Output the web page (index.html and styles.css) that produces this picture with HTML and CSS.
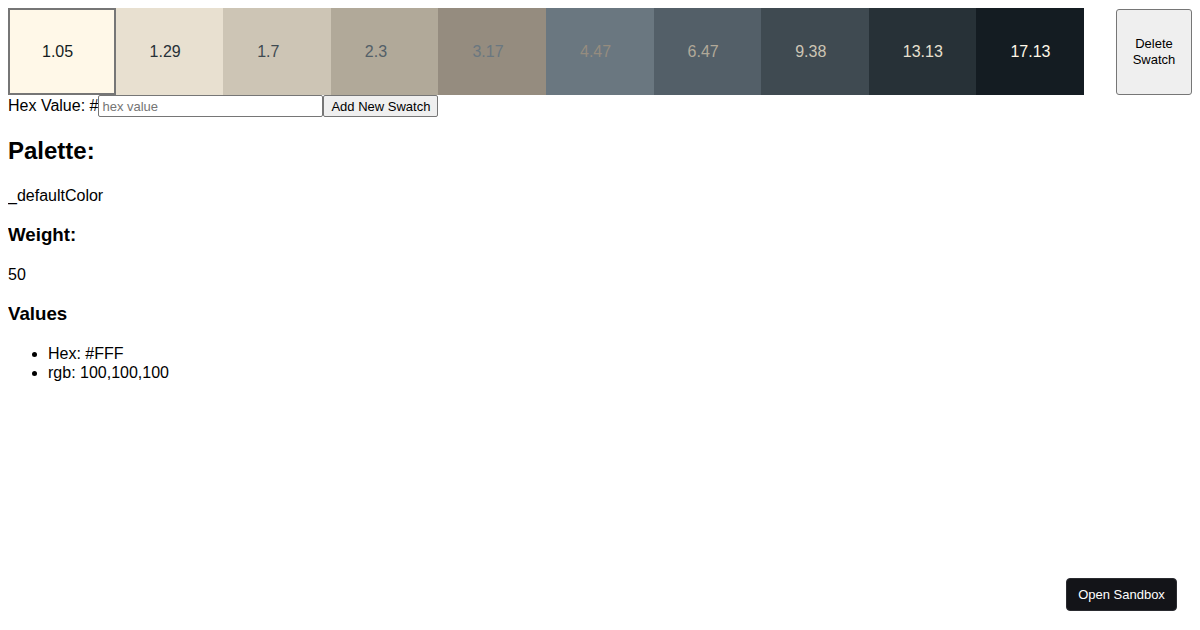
FILE: index.html
```html
<!DOCTYPE html>
<html lang="en">
<head>
  <meta charset="UTF-8">
  <title>Palette</title>
  <link rel="stylesheet" href="styles.css">
</head>
<body>

<div class="top">
  <div class="swatches">
    <div class="swatch s1 selected">1.05</div>
    <div class="swatch s2">1.29</div>
    <div class="swatch s3">1.7</div>
    <div class="swatch s4">2.3</div>
    <div class="swatch s5">3.17</div>
    <div class="swatch s6">4.47</div>
    <div class="swatch s7">6.47</div>
    <div class="swatch s8">9.38</div>
    <div class="swatch s9">13.13</div>
    <div class="swatch s10">17.13</div>
  </div>
  <button class="delete">Delete<br>Swatch</button>
</div>

<div class="add">
  <label for="hex">Hex Value: #</label><input id="hex" type="text" placeholder="hex value"><button>Add New Swatch</button>
</div>

<h2>Palette:</h2>
<p>_defaultColor</p>
<h3>Weight:</h3>
<p>50</p>
<h3>Values</h3>
<ul>
  <li>Hex: #FFF</li>
  <li>rgb: 100,100,100</li>
</ul>

<!-- sandbox link -->
<button class="sandbox">Open Sandbox</button>

</body>
</html>
```
FILE: styles.css
```css
* {
  box-sizing: border-box;
}

body {
  font-family: "Liberation Sans", Arial, sans-serif;
  font-size: 16px;
  line-height: 1.2;
  margin: 8px;
  color: #000;
  background: #fff;
}

button,
input {
  font-family: "Liberation Sans", Arial, sans-serif;
  font-size: 13px;
}

.top {
  display: flex;
  align-items: flex-start;
}

.swatches {
  flex: 1;
  display: grid;
  grid-template-columns: repeat(10, minmax(0, 1fr));
}

.swatch {
  height: 87px;
  display: flex;
  align-items: center;
  padding: 0 32px;
  border: 2px solid transparent;
  white-space: nowrap;
}

.swatch.selected {
  border-color: #767676;
}

.s1 { background: #fff8e8; color: #141c22; }
.s2 { background: #e8e0d0; color: #273137; }
.s3 { background: #cdc5b5; color: #3f4a51; }
.s4 { background: #b1a999; color: #535f68; }
.s5 { background: #958c7f; color: #6a7780; }
.s6 { background: #6a7780; color: #958c7f; }
.s7 { background: #535f68; color: #b1a999; }
.s8 { background: #3f4a51; color: #cdc5b5; }
.s9 { background: #273137; color: #e8e0d0; }
.s10 { background: #141c22; color: #fff8e8; }

.s1, .s2, .s3, .s4, .s5, .s6, .s7, .s8, .s9, .s10 {
  border-color: transparent;
}

.s1.selected {
  border-color: #767676;
}

.delete {
  width: 76px;
  height: 86px;
  margin: 1px 0 0 32px;
  padding: 0;
  line-height: 16px;
  background: #efefef;
  border: 1px solid #767676;
  border-radius: 3px;
  color: #000;
}

.add {
  display: flex;
  align-items: center;
  height: 22px;
}

.add input {
  width: 225px;
  height: 22px;
  padding: 1px 3px;
  border: 1px solid #767676;
  border-radius: 2px;
  font-size: 13px;
}

.add input::placeholder {
  color: #757575;
}

.add button {
  width: 115px;
  height: 22px;
  padding: 0;
  background: #efefef;
  border: 1px solid #767676;
  border-radius: 2px;
  color: #000;
}

h2 {
  font-size: 24px;
  margin: 20px 0;
}

h3 {
  font-size: 18.72px;
  margin: 18.72px 0;
}

p {
  margin: 16px 0;
}

ul {
  margin: 16px 0;
  padding-left: 40px;
}

.sandbox {
  position: fixed;
  right: 23px;
  bottom: 19px;
  width: 111px;
  height: 33px;
  line-height: normal;
  background: #131418;
  color: #fff;
  border: 1px solid #2a2b30;
  border-radius: 4px;
  font-size: 13px;
}
```
